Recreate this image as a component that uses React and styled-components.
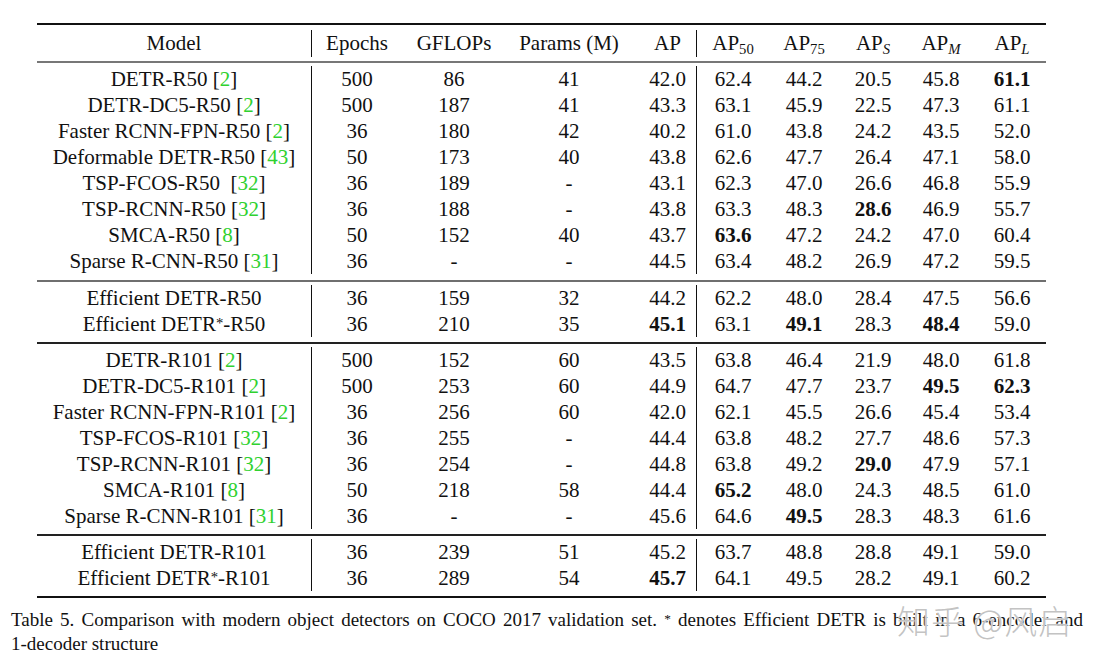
import React from "react";
import styled, { createGlobalStyle } from "styled-components";

const GlobalStyle = createGlobalStyle`
  html, body {
    margin: 0;
    padding: 0;
    background: #fff;
  }
  body {
    font-family: "Liberation Serif", "Times New Roman", serif;
    color: #111;
  }
`;

const Page = styled.div`
  width: 1095px;
  height: 669px;
  padding-top: 23px;
  box-sizing: border-box;
  overflow: hidden;
`;

const Table = styled.div`
  width: 1009px;
  margin-left: 37px;
  font-size: 21px;
`;

const Rule = styled.div`
  height: 2px;
  background: ${(p) => p.$tone || "#111"};
`;

const Section = styled.div`
  padding: ${(p) => (p.$head ? "5px 0 5px" : `3px 0 ${p.$bottom || 5}px`)};
`;

const Row = styled.div`
  display: grid;
  grid-template-columns: 275px 90px 104px 126px 65px 72px 70px 68px 68px 71px;
  height: 26px;
  line-height: 26px;
`;

const Cell = styled.div`
  text-align: center;
  white-space: nowrap;
  box-sizing: border-box;
  padding-left: ${(p) => p.$shift || 0}px;
  border-right: ${(p) => (p.$sep ? "1px solid #111" : "none")};
  font-weight: ${(p) => (p.$bold ? 700 : 400)};
`;

const Sub = styled.sub`
  font-size: 0.7em;
  line-height: 1;
  vertical-align: -4px;
  font-style: ${(p) => (p.$italic ? "italic" : "normal")};
`;

const Star = styled.sup`
  font-size: 0.7em;
  line-height: 1;
  vertical-align: 3px;
`;

const Cite = styled.span`
  color: #2fd12f;
`;

const Caption = styled.p`
  position: relative;
  margin: 10px 0 0 11px;
  width: 1072px;
  font-size: 19px;
  line-height: 24px;
  color: #111;
`;

const JustifiedLine = styled.span`
  display: block;
  text-align: justify;
  text-align-last: justify;
`;

const Watermark = styled.span`
  position: absolute;
  left: 886px;
  top: -7px;
  font-family: "Noto Sans CJK SC", "Noto Sans", sans-serif;
  font-size: 33px;
  line-height: 38px;
  font-weight: 300;
  color: rgba(175, 175, 175, 0.75);
  text-shadow: 0 0 2px #fff, 0 0 1px #fff;
  letter-spacing: 1px;
  white-space: nowrap;
`;

const shifts = [0, 0, 0, 0, 7, 0, 0, 0, 0, 3];
const seps = [true, false, false, false, true, false, false, false, false, false];

const ref = (n) => (
  <>
    [<Cite>{n}</Cite>]
  </>
);

const star = <Star>*</Star>;

const header = [
  "Model",
  "Epochs",
  "GFLOPs",
  "Params (M)",
  "AP",
  <>AP<Sub>50</Sub></>,
  <>AP<Sub>75</Sub></>,
  <>AP<Sub $italic>S</Sub></>,
  <>AP<Sub $italic>M</Sub></>,
  <>AP<Sub $italic>L</Sub></>,
];

// bold cells are marked with a leading "!"
const sections = [
  [
    [<>DETR-R50 {ref(2)}</>, "500", "86", "41", "42.0", "62.4", "44.2", "20.5", "45.8", "!61.1"],
    [<>DETR-DC5-R50 {ref(2)}</>, "500", "187", "41", "43.3", "63.1", "45.9", "22.5", "47.3", "61.1"],
    [<>Faster RCNN-FPN-R50 {ref(2)}</>, "36", "180", "42", "40.2", "61.0", "43.8", "24.2", "43.5", "52.0"],
    [<>Deformable DETR-R50 {ref(43)}</>, "50", "173", "40", "43.8", "62.6", "47.7", "26.4", "47.1", "58.0"],
    [<>TSP-FCOS-R50 &nbsp;{ref(32)}</>, "36", "189", "-", "43.1", "62.3", "47.0", "26.6", "46.8", "55.9"],
    [<>TSP-RCNN-R50 {ref(32)}</>, "36", "188", "-", "43.8", "63.3", "48.3", "!28.6", "46.9", "55.7"],
    [<>SMCA-R50 {ref(8)}</>, "50", "152", "40", "43.7", "!63.6", "47.2", "24.2", "47.0", "60.4"],
    [<>Sparse R-CNN-R50 {ref(31)}</>, "36", "-", "-", "44.5", "63.4", "48.2", "26.9", "47.2", "59.5"],
  ],
  [
    ["Efficient DETR-R50", "36", "159", "32", "44.2", "62.2", "48.0", "28.4", "47.5", "56.6"],
    [<>Efficient DETR{star}-R50</>, "36", "210", "35", "!45.1", "63.1", "!49.1", "28.3", "!48.4", "59.0"],
  ],
  [
    [<>DETR-R101 {ref(2)}</>, "500", "152", "60", "43.5", "63.8", "46.4", "21.9", "48.0", "61.8"],
    [<>DETR-DC5-R101 {ref(2)}</>, "500", "253", "60", "44.9", "64.7", "47.7", "23.7", "!49.5", "!62.3"],
    [<>Faster RCNN-FPN-R101 {ref(2)}</>, "36", "256", "60", "42.0", "62.1", "45.5", "26.6", "45.4", "53.4"],
    [<>TSP-FCOS-R101 {ref(32)}</>, "36", "255", "-", "44.4", "63.8", "48.2", "27.7", "48.6", "57.3"],
    [<>TSP-RCNN-R101 {ref(32)}</>, "36", "254", "-", "44.8", "63.8", "49.2", "!29.0", "47.9", "57.1"],
    [<>SMCA-R101 {ref(8)}</>, "50", "218", "58", "44.4", "!65.2", "48.0", "24.3", "48.5", "61.0"],
    [<>Sparse R-CNN-R101 {ref(31)}</>, "36", "-", "-", "45.6", "64.6", "!49.5", "28.3", "48.3", "61.6"],
  ],
  [
    ["Efficient DETR-R101", "36", "239", "51", "45.2", "63.7", "48.8", "28.8", "49.1", "59.0"],
    [<>Efficient DETR{star}-R101</>, "36", "289", "54", "!45.7", "64.1", "49.5", "28.2", "49.1", "60.2"],
  ],
];

const ruleTones = ["#6f6f6f", "#222", "#222", "#111"];
const bottoms = [6, 5, 5, 5];

function TableRow({ cells }) {
  return (
    <Row>
      {cells.map((c, i) => {
        const bold = typeof c === "string" && c.startsWith("!");
        return (
          <Cell key={i} $shift={shifts[i]} $sep={seps[i]} $bold={bold}>
            {bold ? c.slice(1) : c}
          </Cell>
        );
      })}
    </Row>
  );
}

export default function App() {
  return (
    <>
      <GlobalStyle />
      <Page>
        <Table>
          <Rule $tone="#111" />
          <Section $head>
            <TableRow cells={header} />
          </Section>
          <Rule $tone="#777" />
          {sections.map((rows, si) => (
            <React.Fragment key={si}>
              <Section $bottom={bottoms[si]}>
                {rows.map((r, ri) => (
                  <TableRow key={ri} cells={r} />
                ))}
              </Section>
              <Rule $tone={ruleTones[si]} />
            </React.Fragment>
          ))}
        </Table>
        <Caption>
          <JustifiedLine>
            Table 5. Comparison with modern object detectors on COCO 2017 validation set.{" "}
            <Star>*</Star> denotes Efficient DETR is built in a 6-encoder and
          </JustifiedLine>
          1-decoder structure
          <Watermark>知乎 @风启</Watermark>
        </Caption>
      </Page>
    </>
  );
}
